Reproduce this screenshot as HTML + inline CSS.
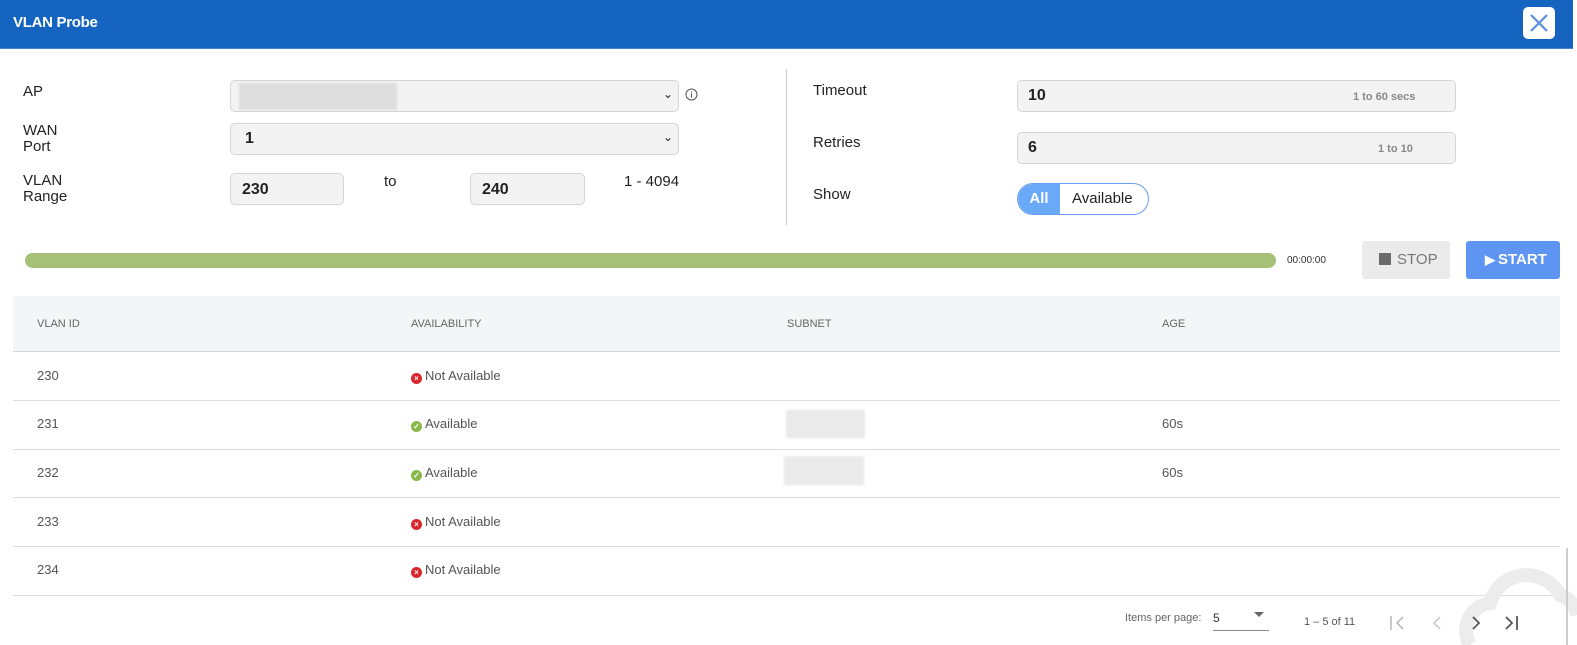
<!DOCTYPE html>
<html><head><meta charset="utf-8"><style>
*{box-sizing:border-box;margin:0;padding:0}
body{width:1577px;height:645px;overflow:hidden;background:#fff;font-family:"Liberation Sans",sans-serif;color:#222;position:relative}
.a{position:absolute}
.hdr{left:0;top:0;width:1573px;height:49px;background:#1565c0;border-bottom:1px solid #4a84d0}
.ttl{left:13px;top:14px;color:#fff;font-size:15px;font-weight:bold;letter-spacing:-0.3px}
.cls{left:1523px;top:7px;width:32px;height:32px;background:#fff;border-radius:5px}
.lbl{font-size:15px;color:#222;line-height:16px}
.inp{background:#f3f3f3;border:1px solid #d4d4d4;border-radius:5px}
.val{font-size:16px;font-weight:bold;color:#222}
.hint{font-size:11px;color:#888;font-weight:bold}
.chev{font-size:12px;color:#222}
.th{font-size:11px;color:#666;top:318px}
.line{left:13px;width:1547px;height:1px;background:#dedede}
.td{font-size:13px;color:#555}
.ic{display:inline-block;width:11px;height:11px;border-radius:50%;color:#fff;font-size:8px;font-weight:bold;text-align:center;line-height:11px;vertical-align:-1px;margin-right:3px}
.blur{background:#eaeaea;filter:blur(1px)}
</style></head><body>
<div class="a hdr"></div>
<div class="a ttl">VLAN Probe</div>
<div class="a cls"><svg width="32" height="32" viewBox="0 0 32 32"><path d="M8 8L24 24M24 8L8 24" stroke="#5b8de0" stroke-width="2.2"/></svg></div>

<div class="a lbl" style="left:23px;top:84px">AP</div>
<div class="a inp" style="left:230px;top:80px;width:449px;height:32px"></div>
<div class="a blur" style="left:239px;top:83px;width:158px;height:27px;background:#ddd"></div>
<div class="a chev" style="left:663px;top:87px">&#8964;</div>
<svg class="a" style="left:685px;top:88px" width="13" height="13"><circle cx="6.5" cy="6.5" r="5.5" fill="none" stroke="#555"/><path d="M6.5 5.5v4M6.5 3.5v1" stroke="#555"/></svg>

<div class="a lbl" style="left:23px;top:123px">WAN<br>Port</div>
<div class="a inp" style="left:230px;top:123px;width:449px;height:32px"></div>
<div class="a val" style="left:245px;top:130px">1</div>
<div class="a chev" style="left:663px;top:130px">&#8964;</div>

<div class="a lbl" style="left:23px;top:173px">VLAN<br>Range</div>
<div class="a inp" style="left:230px;top:173px;width:114px;height:32px"></div>
<div class="a val" style="left:242px;top:181px">230</div>
<div class="a lbl" style="left:384px;top:174px">to</div>
<div class="a inp" style="left:470px;top:173px;width:115px;height:32px"></div>
<div class="a val" style="left:482px;top:181px">240</div>
<div class="a lbl" style="left:624px;top:174px">1 - 4094</div>

<div class="a" style="left:786px;top:69px;width:1px;height:156px;background:#ccc"></div>

<div class="a lbl" style="left:813px;top:83px">Timeout</div>
<div class="a inp" style="left:1017px;top:80px;width:439px;height:32px"></div>
<div class="a val" style="left:1028px;top:87px">10</div>
<div class="a hint" style="left:1353px;top:91px">1 to 60 secs</div>
<div class="a lbl" style="left:813px;top:135px">Retries</div>
<div class="a inp" style="left:1017px;top:132px;width:439px;height:32px"></div>
<div class="a val" style="left:1028px;top:139px">6</div>
<div class="a hint" style="left:1378px;top:143px">1 to 10</div>
<div class="a lbl" style="left:813px;top:187px">Show</div>
<div class="a" style="left:1017px;top:183px;width:132px;height:32px;border:1px solid #6a9ef5;border-radius:16px;overflow:hidden">
<div class="a" style="left:0;top:0;width:42px;height:30px;background:#6aa8f8;border-radius:16px 0 0 16px;color:#fff;font-weight:bold;font-size:15px;text-align:center;line-height:30px">All</div>
<div class="a" style="left:54px;top:0;font-size:15px;line-height:30px;color:#222">Available</div></div>

<div class="a" style="left:25px;top:253px;width:1251px;height:15px;background:#a6c078;border-radius:8px"></div>
<div class="a" style="left:1287px;top:255px;font-size:10px;color:#333">00:00:00</div>
<div class="a" style="left:1362px;top:241px;width:88px;height:38px;background:#ebebeb;border-radius:3px;color:#777;font-size:15px;line-height:38px;padding-left:17px"><span style="display:inline-block;width:12px;height:12px;background:#6b6b6b;vertical-align:-1px;margin-right:6px"></span>STOP</div>
<div class="a" style="left:1466px;top:241px;width:94px;height:38px;background:#5e95f2;border-radius:3px;color:#fff;font-size:15px;font-weight:bold;line-height:38px;padding-left:19px"><span style="font-size:13px;margin-right:3px">&#9654;</span>START</div>

<div class="a" style="left:13px;top:296px;width:1547px;height:55px;background:#f4f5f7"></div>
<div class="a th" style="left:37px">VLAN ID</div>
<div class="a th" style="left:411px">AVAILABILITY</div>
<div class="a th" style="left:787px">SUBNET</div>
<div class="a th" style="left:1162px">AGE</div>
<div class="a line" style="top:351px;background:#d8d8d8"></div>

<div class="a td" style="left:37px;top:368px">230</div>
<div class="a td" style="left:411px;top:368px"><span class="ic" style="background:#d9262c">×</span>Not Available</div>
<div class="a line" style="top:400px"></div>
<div class="a td" style="left:37px;top:416px">231</div>
<div class="a td" style="left:411px;top:416px"><span class="ic" style="background:#8ab74a">✓</span>Available</div>
<div class="a blur" style="left:786px;top:410px;width:79px;height:28px"></div>
<div class="a td" style="left:1162px;top:416px">60s</div>
<div class="a line" style="top:449px"></div>
<div class="a td" style="left:37px;top:465px">232</div>
<div class="a td" style="left:411px;top:465px"><span class="ic" style="background:#8ab74a">✓</span>Available</div>
<div class="a blur" style="left:784px;top:456px;width:80px;height:29px"></div>
<div class="a td" style="left:1162px;top:465px">60s</div>
<div class="a line" style="top:497px"></div>
<div class="a td" style="left:37px;top:514px">233</div>
<div class="a td" style="left:411px;top:514px"><span class="ic" style="background:#d9262c">×</span>Not Available</div>
<div class="a line" style="top:546px"></div>
<div class="a td" style="left:37px;top:562px">234</div>
<div class="a td" style="left:411px;top:562px"><span class="ic" style="background:#d9262c">×</span>Not Available</div>
<div class="a line" style="top:595px"></div>

<svg class="a" style="left:1450px;top:555px" width="127" height="90"><path d="M20 90 A28 28 0 0 1 40 48 A38 38 0 0 1 110 40 A26 26 0 0 1 127 60" fill="none" stroke="#ececec" stroke-width="14"/></svg>
<div class="a" style="left:1566px;top:548px;width:2px;height:97px;background:#ccc"></div>

<div class="a" style="left:1125px;top:612px;font-size:11px;color:#666">Items per page:</div>
<div class="a" style="left:1213px;top:611px;font-size:12px;color:#333">5</div>
<div class="a" style="left:1213px;top:630px;width:56px;height:1px;background:#888"></div>
<div class="a" style="left:1254px;top:612px;width:0;height:0;border-left:5px solid transparent;border-right:5px solid transparent;border-top:5px solid #666"></div>
<div class="a" style="left:1304px;top:616px;font-size:11px;color:#555">1 – 5 of 11</div>
<svg class="a" style="left:1385px;top:612px" width="150" height="24"><path d="M6 4v14M18 5l-6 6 6 6" fill="none" stroke="#bbb" stroke-width="1.6"/><path d="M55 5l-6 6 6 6" fill="none" stroke="#ccc" stroke-width="1.6"/><path d="M88 5l6 6-6 6" fill="none" stroke="#555" stroke-width="1.8"/><path d="M121 5l6 6-6 6M132 4v14" fill="none" stroke="#555" stroke-width="1.8"/></svg>
</body></html>
